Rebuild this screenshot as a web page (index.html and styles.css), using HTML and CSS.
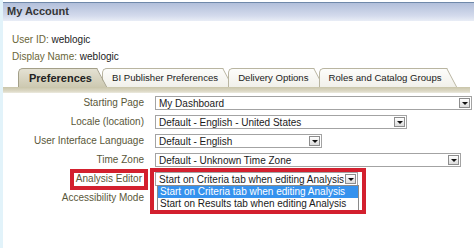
FILE: index.html
```html
<!DOCTYPE html>
<html lang="en">

<head>
    <meta charset="UTF-8">
    <meta name="viewport" content="width=device-width, initial-scale=1.0">
    <title>My Account</title>

    <link rel="stylesheet" href="styles.css">
</head>

<body>

    <div class="titlebar">My Account</div>

    <div class="info">
        <div><span class="lbl">User ID:</span> weblogic</div>
        <div><span class="lbl">Display Name:</span> weblogic</div>
    </div>

    <div class="tabs">
        <div class="tab active">Preferences</div>
        <div class="tab">BI Publisher Preferences</div>
        <div class="tab">Delivery Options</div>
        <div class="tab">Roles and Catalog Groups</div>
    </div>
    <div class="band"></div>

    <div class="form">
        <label>Starting Page</label>
        <div class="select w1">My Dashboard<span class="btn"></span></div>

        <label>Locale (location)</label>
        <div class="select w2">Default - English - United States<span class="btn"></span></div>

        <label>User Interface Language</label>
        <div class="select w3">Default - English<span class="btn"></span></div>

        <label>Time Zone</label>
        <div class="select w4">Default - Unknown Time Zone<span class="btn"></span></div>

        <label class="marked">Analysis Editor<span class="redbox small"></span></label>
        <div class="select w5 open">Start on Criteria tab when editing Analysis<span class="btn"></span>
            <div class="list">
                <div class="opt sel">Start on Criteria tab when editing Analysis</div>
                <div class="opt">Start on Results tab when editing Analysis</div>
            </div>
            <span class="redbox big"></span>
        </div>

        <label>Accessibility Mode</label>
        <div></div>
    </div>

</body>

</html>
```

FILE: styles.css
```css
* {
    padding: 0;
    margin: 0;
    box-sizing: border-box;
}

body {
    background-color: #fff;
    border-left: 3px solid #e2f3fa;
    height: 100vh;
    font-family: "Liberation Sans", Arial, sans-serif;
    font-size: 10px;
    color: #222;
}

.titlebar {
    margin-top: 2px;
    height: 19px;
    border-top: 1px solid #7089aa;
    background: linear-gradient(#b2bfda, #d3daec 70%, #e9edf6);
    padding-left: 4px;
    font-size: 11px;
    font-weight: bold;
    line-height: 17px;
    color: #363636;
}

.info {
    padding: 10px 0 0 9px;
    line-height: 17px;
}

.info .lbl {
    color: #6a6638;
}

.tabs {
    display: flex;
    margin: 3px 0 0 15px;
    height: 19px;
}

.tab {
    position: relative;
    z-index: 0;
    height: 19px;
    margin-right: 8px;
    padding: 0 2px 0 9px;
    line-height: 18px;
    font-size: 9.6px;
    color: #222;
    background: linear-gradient(#fdfdfb, #f1f0ea);
    border: 1px solid #b9b5a1;
    border-right: none;
    border-bottom: none;
    border-radius: 5px 0 0 0;
}

/* slanted right side of the tab */
.tab::after {
    content: "";
    position: absolute;
    z-index: -1;
    top: -1px;
    bottom: 0;
    right: -3px;
    width: 20px;
    background: inherit;
    border-top: 1px solid #b9b5a1;
    border-right: 1px solid #b9b5a1;
    transform: skewX(28deg);
    transform-origin: top left;
}

.tab.active {
    z-index: 2;
    padding-left: 10px;
    font-size: 11px;
    font-weight: bold;
    background: linear-gradient(#e4e1d3, #cdc9b1);
    border-color: #a39f88;
}

.tab.active::after {
    border-color: #a39f88;
}

.band {
    height: 6px;
    margin-right: 4px;
    background: linear-gradient(#c9c5aa, #ddd9c6 70%, #eceadf);
}

.form {
    display: grid;
    grid-template-columns: 141px 1fr;
    column-gap: 11px;
    row-gap: 5px;
    padding-top: 3px;
}

.form label {
    position: relative;
    text-align: right;
    color: #5a5739;
    line-height: 14px;
}

.form label.marked {
    padding-right: 2px;
}

.select {
    position: relative;
    height: 14px;
    border: 1px solid #a3a3a3;
    display: flex;
    align-items: center;
    padding-left: 3px;
    color: #1a1a1a;
    background: #fff;
}

.btn {
    position: relative;
    margin-left: auto;
    margin-right: 1px;
    width: 11px;
    height: 10px;
    border: 1px solid #8d8d8d;
    background: linear-gradient(#fff, #dcdcdc);
}

.btn::after {
    content: "";
    position: absolute;
    left: 2px;
    top: 3px;
    border-left: 3px solid transparent;
    border-right: 3px solid transparent;
    border-top: 3px solid #111;
}

.w1 { width: 317px; }
.w2 { width: 252px; }
.w3 { width: 167px; }
.w4 { width: 306px; }
.w5 { width: 203px; }

.list {
    position: absolute;
    left: 1px;
    top: 12px;
    width: 202px;
    border: 1px solid #8a8a8a;
    background: #fff;
    z-index: 3;
}

.opt {
    height: 12px;
    line-height: 12px;
    padding-left: 2px;
}

.opt.sel {
    background: #3592ee;
    color: #fff;
}

.redbox {
    position: absolute;
    border: 4px solid #d3202e;
    z-index: 4;
}

.redbox.big {
    left: -6px;
    top: -5px;
    width: 216px;
    height: 46px;
}

.redbox.small {
    left: 67px;
    right: -4px;
    top: -3px;
    height: 21px;
}
```
